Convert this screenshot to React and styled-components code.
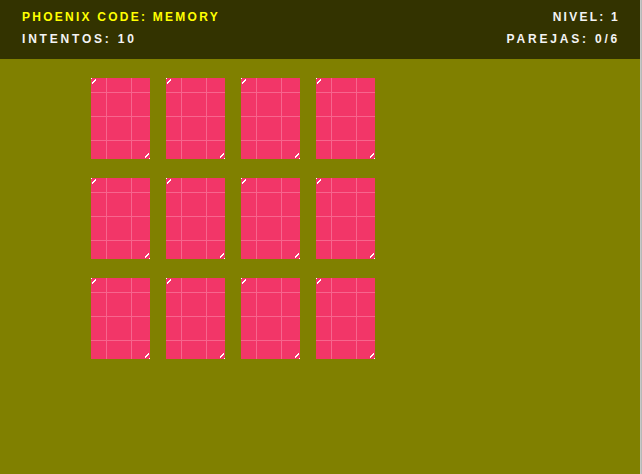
import React from "react";
import styled, { createGlobalStyle } from "styled-components";

const Global = createGlobalStyle`
  html, body { margin: 0; padding: 0; background: #b8b8b8; }
  body { font-family: "Liberation Sans", Arial, sans-serif; }
`;

const Page = styled.div`
  width: 640px;
  height: 474px;
  background: #808000;
  border-right: 1px solid #c8c8c8;
  overflow: hidden;
`;

const Header = styled.header`
  height: 59px;
  box-sizing: border-box;
  background: #333300;
  display: flex;
  justify-content: space-between;
  padding: 6px 20px 0 22px;
`;

const Col = styled.div`
  display: flex;
  flex-direction: column;
  align-items: ${(p) => (p.$right ? "flex-end" : "flex-start")};
`;

const Label = styled.div`
  font-size: 12px;
  font-weight: bold;
  letter-spacing: ${(p) => (p.$wide ? "2.8px" : "2.25px")};
  line-height: 22px;
  color: ${(p) => (p.$accent ? "#ffff00" : "#f4f4f4")};
`;

const Board = styled.main`
  display: grid;
  grid-template-columns: repeat(4, 59px);
  grid-auto-rows: 81px;
  column-gap: 16px;
  row-gap: 19px;
  padding: 19px 0 0 91px;
`;

const Card = styled.div`
  position: relative;
  background-color: #f23668;
  background-image:
    linear-gradient(to right, #f7658d 1px, transparent 1px),
    linear-gradient(to bottom, #f7658d 1px, transparent 1px);
  background-size: 25px 24px;
  background-position: 15px 14px;
`;

const Corner = styled.svg`
  position: absolute;
  width: 5px;
  height: 6px;
  ${(p) => (p.$end ? "right: 0; bottom: 0; transform: rotate(180deg);" : "left: 0; top: 0;")}
`;

const Mark = ({ end }) => (
  <Corner $end={end} viewBox="0 0 5 6" shapeRendering="crispEdges">
    <rect x="0" y="0" width="1" height="1" fill="#fff" />
    <path d="M1 4h2v1H1zM2 3h2v1H2zM3 2h2v1H3zM4 1h1v1H4zM1 5h1v1H1z" fill="#fff" />
  </Corner>
);

export default function App() {
  return (
    <>
      <Global />
      <Page>
        <Header>
          <Col>
            <Label $accent>PHOENIX CODE: MEMORY</Label>
            <Label $wide>INTENTOS: 10</Label>
          </Col>
          <Col $right>
            <Label>NIVEL: 1</Label>
            <Label $wide>PAREJAS: 0/6</Label>
          </Col>
        </Header>
        <Board>
          {Array.from({ length: 12 }).map((_, i) => (
            <Card key={i}>
              <Mark />
              <Mark end />
            </Card>
          ))}
        </Board>
      </Page>
    </>
  );
}
